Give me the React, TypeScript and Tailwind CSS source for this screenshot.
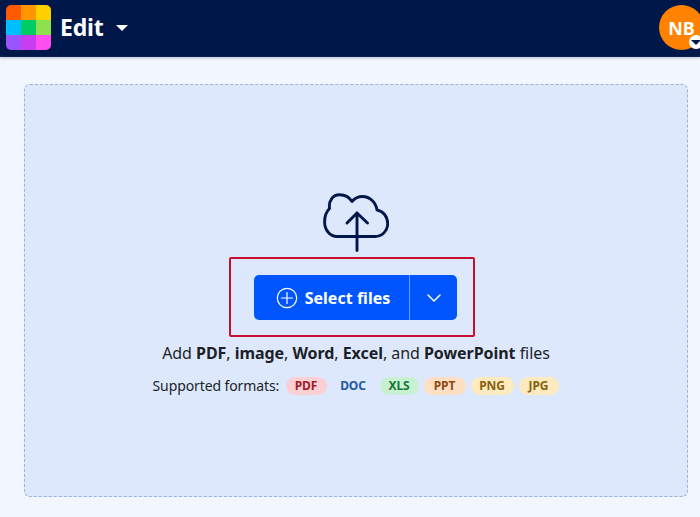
import React from "react";

const grid = ["#ff5a00","#ff9500","#ffd000","#00bfff","#00cc66","#8fe04f","#9a55ff","#c93df0","#ff4df0"];

const formats = [
  { t: "PDF", c: "bg-[#fbd0d4] text-[#a11b2b] w-[41px]" },
  { t: "DOC", c: "bg-[#dce8fe] text-[#27589f] w-[43px]" },
  { t: "XLS", c: "bg-[#c9f0d2] text-[#137a33] w-[39px]" },
  { t: "PPT", c: "bg-[#fde0c4] text-[#8f4a10] w-[42px]" },
  { t: "PNG", c: "bg-[#fdeabf] text-[#87610f] w-[43px]" },
  { t: "JPG", c: "bg-[#fdeabf] text-[#87610f] w-[40px]" },
];

export default function App() {
  return (
    <div className="h-[517px] w-[700px] overflow-hidden bg-[#f2f6ff] font-['Noto_Sans',sans-serif] text-[#1c1f26]">
      <header className="relative flex h-[57px] items-center border-b border-[#0d2250] bg-[#00174a] pb-[1px] shadow-[0_1px_3px_rgba(0,23,74,0.25)]">
        <div className="ml-[6px] grid h-[45px] w-[45px] grid-cols-3 grid-rows-3 overflow-hidden rounded-[5px]">
          {grid.map((c) => (
            <div key={c} style={{ background: c }} />
          ))}
        </div>
        <span className="ml-[9px] text-[23px] leading-none font-bold tracking-[-0.2px] text-white">Edit</span>
        <div className="ml-[13px] h-0 w-0 border-x-[6px] border-t-[6px] border-x-transparent border-t-white" />
        <div className="relative mr-[-4px] ml-auto flex h-[45px] w-[45px] items-center justify-center rounded-full bg-[#ff8200] pt-[1px] text-[18px] font-bold text-white">
          NB
          <div className="absolute right-[1px] bottom-[1px] flex h-[14px] w-[14px] items-center justify-center rounded-full bg-white">
            <div className="h-0 w-0 border-x-[5px] border-t-[5px] border-x-transparent border-t-[#00174a]" />
          </div>
        </div>
      </header>
      <main className="mt-[27px] mr-[12px] ml-[24px] flex h-[413px] flex-col items-center rounded-[6px] border border-dashed border-[#9fb0da] bg-[#dde8fd] pt-[108px]">
        <svg width="66" height="59" viewBox="0 0 66 59" fill="none" stroke="#00174a" strokeWidth="2.9" strokeLinecap="round" strokeLinejoin="round">
          <path d="M14 43.5H52C59.5 43.5 64.7 37.5 64.7 30.5C64.7 23.5 60 18 54 17C53 9.5 47 3.5 39.5 3.5C35.5 3.5 31.5 5.5 29 8.5C26.5 4.5 22 1.8 16.5 1.8C10 1.8 5.5 7.5 6.5 15.5C3.5 18.5 1.6 24 1.6 29C1.6 37 7 43.5 14 43.5Z" />
          <path d="M34 57.5V20M24 30L34 20L44.5 30" />
        </svg>
        <div className="relative mt-[23px] mr-[1px] flex h-[45px] w-[203px] rounded-[5px] bg-[#0055ff] text-white">
          <div className="flex w-[156px] items-center justify-center gap-[7px] border-r border-[#6f9dff] pl-[3px]">
            <svg width="22" height="22" viewBox="0 0 22 22" fill="none" stroke="white" strokeWidth="1.2" strokeLinecap="round">
              <circle cx="11" cy="11" r="9.7" />
              <path d="M11 5.5V16.5M5.5 11H16.5" />
            </svg>
            <span className="text-[16px] font-bold tracking-[0.03px]">Select files</span>
          </div>
          <div className="flex flex-1 items-center justify-center">
            <svg width="16" height="10" viewBox="0 0 16 10" fill="none" stroke="white" strokeWidth="1.5" strokeLinecap="round" strokeLinejoin="round">
              <path d="M2 2L8 8L14 2" />
            </svg>
          </div>
          <div className="absolute -top-[18px] -left-[25px] h-[80px] w-[246px] rounded-[2px] border-2 border-[#c8102e]" />
        </div>
        <p className="mt-[21px] text-[16px] leading-[24px] tracking-[-0.05px] whitespace-nowrap">
          Add <b>PDF</b>, <b>image</b>, <b>Word</b>, <b>Excel</b>, and <b>PowerPoint</b> files
        </p>
        <div className="mt-[10px] mr-[1px] flex items-center text-[14px] tracking-[-0.1px] whitespace-nowrap">
          <span className="mr-[5px] w-[128px]">Supported formats:</span>
          <div className="flex gap-[5px]">
            {formats.map((f) => (
              <span key={f.t} className={`flex h-[18px] items-center justify-center rounded-full text-[12px] font-bold ${f.c}`}>
                {f.t}
              </span>
            ))}
          </div>
        </div>
      </main>
    </div>
  );
}
